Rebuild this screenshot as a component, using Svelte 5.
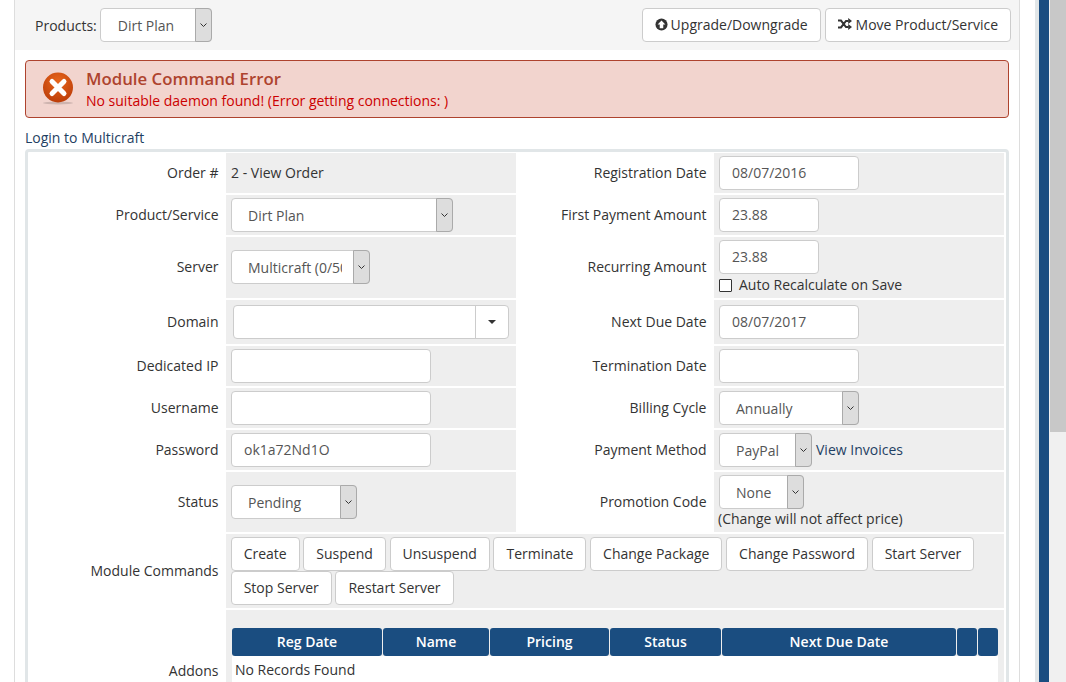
<script lang="ts">
    const commands = ["Create", "Suspend", "Unsuspend", "Terminate", "Change Package", "Change Password", "Start Server", "Stop Server", "Restart Server"];
    const addonCols = [
        { label: "Reg Date", width: 150 },
        { label: "Name", width: 106 },
        { label: "Pricing", width: 119 },
        { label: "Status", width: 111 },
        { label: "Next Due Date", width: 234 },
        { label: "", width: 20 },
        { label: "", width: 20 },
    ];
</script>

{#snippet sel(text, width)}
    <span class="sel" style="width: {width}px">
        <span class="sel-text">{text}</span>
        <span class="sel-arrow">
            <svg width="7" height="4" viewBox="0 0 7 4"><path d="M0.5 0.5 L3.5 3.5 L6.5 0.5" fill="none" stroke="#333" stroke-width="1" /></svg>
        </span>
    </span>
{/snippet}

<div class="page">
    <main class="panel">
        <div class="topbar">
            <div class="products">
                <span class="products-label">Products:</span>
                {@render sel("Dirt Plan", 112)}
            </div>
            <div class="top-actions">
                <span class="btn">
                    <svg width="13" height="13" viewBox="0 0 14 14"><circle cx="7" cy="7" r="6.5" fill="#333" /><path d="M7 2.6 L11.2 7 H8.9 V11 H5.1 V7 H2.8 Z" fill="#fff" /></svg>
                    Upgrade/Downgrade
                </span>
                <span class="btn">
                    <svg class="shuffle" width="14" height="12" viewBox="0 0 14 12"><path d="M0 2.6 H3 L8 9 H10.5 M0 9.4 H3 L8 3 H10.5" fill="none" stroke="#333" stroke-width="2" /><path d="M10.2 0 L14 3 L10.2 6 Z M10.2 6 L14 9 L10.2 12 Z" fill="#333" /></svg>
                    Move Product/Service
                </span>
            </div>
        </div>

        <div class="content">
            <div class="alert">
                <svg class="alert-icon" width="32" height="34" viewBox="0 0 32 34">
                    <defs>
                        <radialGradient id="redball" cx="50%" cy="30%" r="75%">
                            <stop offset="0" stop-color="#e8661c" />
                            <stop offset="1" stop-color="#b93a08" />
                        </radialGradient>
                    </defs>
                    <ellipse cx="16" cy="31" rx="15" ry="1.5" fill="#000" opacity="0.15" />
                    <circle cx="16" cy="15.5" r="15" fill="url(#redball)" />
                    <path d="M10 9.5 L22 21.5 M22 9.5 L10 21.5" fill="none" stroke="#fff" stroke-width="5" stroke-linecap="round" />
                </svg>
                <div>
                    <div class="alert-title">Module Command Error</div>
                    <div class="alert-msg">No suitable daemon found! (Error getting connections: )</div>
                </div>
            </div>

            <div class="login">Login to Multicraft</div>

            <div class="form">
                <div class="row h40">
                    <div class="lbl">Order #</div>
                    <div class="fld">2 - View Order</div>
                    <div class="lbl">Registration Date</div>
                    <div class="fld"><span class="inp w140">08/07/2016</span></div>
                </div>
                <div class="row h40">
                    <div class="lbl">Product/Service</div>
                    <div class="fld">{@render sel("Dirt Plan", 222)}</div>
                    <div class="lbl">First Payment Amount</div>
                    <div class="fld"><span class="inp w100">23.88</span></div>
                </div>
                <div class="row h61">
                    <div class="lbl">Server</div>
                    <div class="fld">{@render sel("Multicraft (0/50)", 139)}</div>
                    <div class="lbl">Recurring Amount</div>
                    <div class="fld fld-col">
                        <span class="inp w100">23.88</span>
                        <label class="check"><span class="box"></span>Auto Recalculate on Save</label>
                    </div>
                </div>
                <div class="row h44">
                    <div class="lbl">Domain</div>
                    <div class="fld">
                        <span class="combo">
                            <span class="combo-input"></span>
                            <span class="combo-caret"></span>
                        </span>
                    </div>
                    <div class="lbl">Next Due Date</div>
                    <div class="fld"><span class="inp w140">08/07/2017</span></div>
                </div>
                <div class="row h40">
                    <div class="lbl">Dedicated IP</div>
                    <div class="fld"><span class="inp w200"></span></div>
                    <div class="lbl">Termination Date</div>
                    <div class="fld"><span class="inp w140"></span></div>
                </div>
                <div class="row h40">
                    <div class="lbl">Username</div>
                    <div class="fld"><span class="inp w200"></span></div>
                    <div class="lbl">Billing Cycle</div>
                    <div class="fld">{@render sel("Annually", 140)}</div>
                </div>
                <div class="row h40">
                    <div class="lbl">Password</div>
                    <div class="fld"><span class="inp w200">ok1a72Nd1O</span></div>
                    <div class="lbl">Payment Method</div>
                    <div class="fld">{@render sel("PayPal", 93)}<span class="link">View Invoices</span></div>
                </div>
                <div class="row h60">
                    <div class="lbl">Status</div>
                    <div class="fld">{@render sel("Pending", 126)}</div>
                    <div class="lbl">Promotion Code</div>
                    <div class="fld fld-col">
                        {@render sel("None", 85)}
                        <span class="note">(Change will not affect price)</span>
                    </div>
                </div>
                <div class="row wide h74">
                    <div class="lbl">Module Commands</div>
                    <div class="fld cmds">
                        {#each commands as c}
                            <span class="cmd">{c}</span>
                        {/each}
                    </div>
                </div>
                <div class="row wide addons">
                    <div class="lbl">Addons</div>
                    <div class="fld addon-fld">
                        <div class="thead">
                            {#each addonCols as col}
                                <div class="th" style="width: {col.width}px">{col.label}</div>
                            {/each}
                        </div>
                        <div class="tbody">No Records Found</div>
                    </div>
                </div>
            </div>
        </div>
    </main>
    <aside class="side"><div class="side-gap"></div><div class="side-blue"></div><div class="scroll"><div class="thumb"></div></div></aside>
</div>

<style>
    :global(body) {
        margin: 0;
        background: #fff;
        overflow: hidden;
    }

    .page {
        display: flex;
        height: 682px;
        width: 1066px;
        overflow: hidden;
        padding-left: 14px;
        box-sizing: border-box;
        font-family: "Open Sans", sans-serif;
        font-size: 14px;
        color: #333;
    }

    .panel {
        width: 1006px;
        box-sizing: border-box;
        border-left: 1px solid #ddd;
        border-right: 1px solid #ddd;
        flex-shrink: 0;
    }

    .topbar {
        display: flex;
        justify-content: space-between;
        align-items: center;
        height: 50px;
        box-sizing: border-box;
        background: #f5f5f5;
        padding: 0 8px 0 20px;
    }

    .products {
        display: flex;
        align-items: center;
        gap: 3px;
    }

    .products .sel-text {
        padding-left: 17px;
    }

    .top-actions {
        display: flex;
        gap: 4px;
    }

    .btn {
        display: inline-flex;
        align-items: center;
        gap: 3px;
        height: 34px;
        padding: 0 12px 2px;
        box-sizing: border-box;
        background: #fff;
        border: 1px solid #ccc;
        border-radius: 4px;
        white-space: nowrap;
    }

    .shuffle {
        margin-right: 1px;
    }

    .content {
        padding: 10px 10px 0;
    }

    .alert {
        display: flex;
        align-items: center;
        height: 58px;
        box-sizing: border-box;
        background: #f2d4ce;
        border: 1px solid #ae432e;
        border-radius: 4px;
        padding-left: 16px;
    }

    .alert-icon {
        margin-right: 12px;
        flex-shrink: 0;
    }

    .alert-title {
        font-size: 16.8px;
        font-weight: 600;
        color: #ae432e;
        line-height: 22px;
    }

    .alert-msg {
        color: #cc0000;
        line-height: 20px;
        margin-top: 1px;
    }

    .login {
        margin-top: 10px;
        line-height: 19px;
        color: #1f3f63;
    }

    .form {
        margin-top: 2px;
        width: 984px;
        box-sizing: border-box;
        border: 3px solid #e1e6e8;
        border-radius: 4px;
        background: #fff;
        padding: 1px 2px 0 0;
    }

    .row {
        display: grid;
        grid-template-columns: 198px 290px 198px 1fr;
        margin-bottom: 2px;
    }

    .row.wide {
        grid-template-columns: 198px 1fr;
    }

    .h40 { height: 40px; }
    .h44 { height: 44px; }
    .h60 { height: 60px; }
    .h61 { height: 61px; }
    .h74 { height: 74px; }

    .w100 { width: 100px; }
    .w140 { width: 140px; }
    .w200 { width: 200px; }

    .lbl {
        display: flex;
        align-items: center;
        justify-content: flex-end;
        padding: 0 7.5px 2px 0;
        background: #fff;
        white-space: nowrap;
    }

    .fld {
        display: flex;
        align-items: center;
        background: #eee;
        padding: 0 5px 1px;
        min-width: 0;
    }

    .fld-col {
        flex-direction: column;
        align-items: flex-start;
        justify-content: flex-start;
        padding-top: 3px;
    }

    .inp {
        display: block;
        height: 34px;
        line-height: 32px;
        box-sizing: border-box;
        background: #fff;
        border: 1px solid #ccc;
        border-radius: 4px;
        padding: 0 12px;
        color: #555;
        flex-shrink: 0;
    }

    .sel {
        display: inline-flex;
        height: 34px;
        box-sizing: border-box;
        background: #fff;
        border: 1px solid #ccc;
        border-radius: 4px;
        color: #555;
        flex-shrink: 0;
    }

    .sel-text {
        flex: 1;
        min-width: 0;
        padding-left: 16px;
        margin-right: 11px;
        line-height: 33px;
        white-space: nowrap;
        overflow: hidden;
    }

    .sel-arrow {
        display: flex;
        align-items: center;
        justify-content: center;
        width: 17px;
        margin: -1px -1px -1px 0;
        box-sizing: border-box;
        flex-shrink: 0;
        background: #ddd;
        border: 1px solid #aaa;
        border-radius: 0 4px 4px 0;
    }

    .check {
        display: flex;
        align-items: center;
        line-height: 20px;
        margin-top: 1px;
    }

    .box {
        width: 11px;
        height: 11px;
        border: 1px solid #333;
        background: #fff;
        margin-right: 7px;
        border-radius: 1px;
    }

    .note {
        line-height: 19px;
        margin-left: -1px;
    }

    .link {
        margin-left: 4px;
        color: #1f3f63;
    }

    .combo {
        display: flex;
        width: 276px;
        height: 34px;
        margin-left: 2px;
        box-sizing: border-box;
        background: #fff;
        border: 1px solid #ccc;
        border-radius: 4px;
    }

    .combo-input {
        flex: 1;
    }

    .combo-caret {
        position: relative;
        width: 32px;
        border-left: 1px solid #ccc;
    }

    .combo-caret::after {
        content: "";
        position: absolute;
        left: 12px;
        top: 14px;
        border-top: 4px solid #333;
        border-left: 4px solid transparent;
        border-right: 4px solid transparent;
    }

    .cmds {
        flex-wrap: wrap;
        align-content: flex-start;
        gap: 0 3.64px;
        padding-top: 3px;
        padding-left: 4.7px;
    }

    .cmd {
        display: block;
        height: 34px;
        line-height: 32px;
        box-sizing: border-box;
        padding: 0 12px;
        background: #fff;
        border: 1px solid #ccc;
        border-radius: 4px;
        white-space: nowrap;
    }

    .addons {
        margin-bottom: 0;
        height: 122px;
    }

    .addon-fld {
        display: block;
        padding: 18px 0 0 6px;
    }

    .thead {
        display: flex;
        gap: 1px;
    }

    .th {
        height: 28px;
        line-height: 28px;
        flex-shrink: 0;
        background: #1a4d80;
        color: #fff;
        font-weight: 600;
        text-align: center;
        border-radius: 3px;
    }

    .tbody {
        width: 766px;
        box-sizing: border-box;
        background: #fff;
        padding-left: 3px;
        line-height: 28px;
        height: 76px;
    }

    .side {
        display: flex;
        flex: 1;
        min-width: 0;
    }

    .side-gap {
        width: 15px;
        border-right: 4px solid #e1e6e8;
    }

    .side-blue {
        width: 10px;
        background: #1a4d80;
    }

    .scroll {
        flex: 1;
        background: #f0f0f0;
        padding-left: 1px;
    }

    .thumb {
        height: 432px;
        background: #c8c8c8;
    }
</style>
